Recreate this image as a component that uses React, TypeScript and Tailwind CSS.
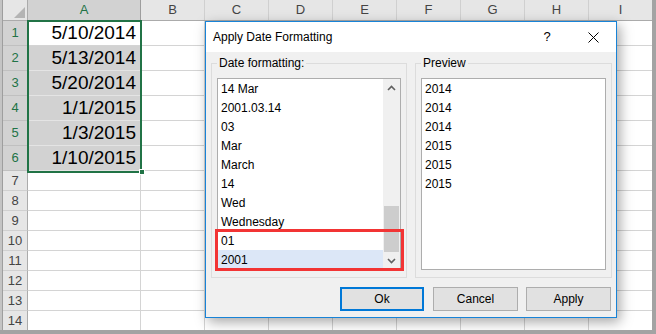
import React from "react"

const font = { fontFamily: '"Liberation Sans", Arial, sans-serif' }

const dates = ["5/10/2014", "5/13/2014", "5/20/2014", "1/1/2015", "1/3/2015", "1/10/2015"]
const otherCols = ["B", "C", "D", "E", "F", "G", "H", "I"]
const formats = ["14 Mar", "2001.03.14", "03", "Mar", "March", "14", "Wed", "Wednesday", "01", "2001"]
const preview = ["2014", "2014", "2014", "2015", "2015", "2015"]

function Chevron({ down = false }: { down?: boolean }) {
  return (
    <svg width="9" height="6" viewBox="0 0 9 6" className={down ? "rotate-180" : ""}>
      <path d="M1 5 L4.5 1.5 L8 5" fill="none" stroke="#606060" strokeWidth="1.6" />
    </svg>
  )
}

function Sheet() {
  return (
    <div className="flex h-full flex-col">
      {/* column headers */}
      <div className="flex h-[21px] shrink-0 border-b border-[#ababab] text-[13px] text-[#444]">
        <div className="relative w-[25px] shrink-0 border-r border-[#ababab] bg-[#e6e6e6]">
          <div className="absolute right-[2px] bottom-[2px] h-0 w-0 border-b-[11px] border-l-[11px] border-b-[#b4b4b4] border-l-transparent" />
        </div>
        <div className="flex w-[113px] shrink-0 items-center justify-center border-r border-[#9e9e9e] bg-[#d2d2d2] text-[#217346]">
          A
        </div>
        {otherCols.map((c) => (
          <div
            key={c}
            className="flex w-[64px] shrink-0 items-center justify-center border-r border-[#d0d0d0] bg-[#e6e6e6]"
          >
            {c}
          </div>
        ))}
      </div>

      {Array.from({ length: 14 }, (_, i) => {
        const selected = i < 6
        return (
          <div key={i} className={`flex shrink-0 ${selected ? "h-[25px]" : "h-[20px]"}`}>
            <div
              className={`flex w-[25px] shrink-0 items-center justify-center border-r border-b border-[#ababab] text-[13px] ${
                selected ? "bg-[#d2d2d2] text-[#217346] border-b-[#c0c0c0]" : "bg-[#e6e6e6] text-[#444] border-b-[#d0d0d0]"
              }`}
            >
              {i + 1}
            </div>
            <div
              className={`flex w-[113px] shrink-0 items-center justify-end border-r border-b pr-[4px] text-[19px] text-black ${
                i === 0 ? "bg-white border-[#d4d4d4]" : selected ? "bg-[#d2d2d2] border-[#e4e4e4]" : "bg-white border-[#d4d4d4]"
              }`}
            >
              {selected ? dates[i] : ""}
            </div>
            {otherCols.map((c) => (
              <div key={c} className="w-[64px] shrink-0 border-r border-b border-[#d4d4d4] bg-white" />
            ))}
          </div>
        )
      })}
    </div>
  )
}

function ListBox({ items, scroll = false }: { items: string[]; scroll?: boolean }) {
  return (
    <div className="relative flex h-[192px] border border-[#adadad] bg-white">
      <div className="flex-1">
        {items.map((t, i) => (
          <div
            key={i}
            className={`flex h-[19px] items-center pl-[3px] text-[12px] text-black ${
              scroll && i === items.length - 1 ? "bg-[#dce7f7]" : ""
            }`}
          >
            {t}
          </div>
        ))}
      </div>
      {scroll && (
        <div className="flex w-[17px] flex-col bg-[#f0f0f0]">
          <div className="flex h-[17px] items-center justify-center">
            <Chevron />
          </div>
          <div className="flex flex-1 flex-col justify-end px-px">
            <div className="h-[46px] bg-[#cdcdcd]" />
          </div>
          <div className="flex h-[17px] items-center justify-center">
            <Chevron down />
          </div>
        </div>
      )}
      {scroll && (
        // red highlight drawn around the last two formats
        <div className="pointer-events-none absolute left-[-3px] top-[150px] h-[42px] w-[189px] border-[3px] border-[#f23434]" />
      )}
    </div>
  )
}

function Dialog() {
  return (
    <div className="absolute left-[205px] top-[21px] flex h-[297px] w-[412px] flex-col border border-[#1883d7] bg-[#f0f0f0] shadow-[3px_4px_12px_rgba(0,0,0,0.35)]">
      <div className="flex h-[30px] shrink-0 items-center bg-white text-[12px] text-black">
        <span className="pl-[7px]">Apply Date Formatting</span>
        <div className="ml-auto flex h-full">
          <div className="flex w-[46px] items-center justify-center text-[13px]">?</div>
          <div className="flex w-[46px] items-center justify-center">
            <svg width="11" height="11" viewBox="0 0 11 11">
              <path d="M0.5 0.5 L10.5 10.5 M10.5 0.5 L0.5 10.5" stroke="#000" strokeWidth="1" />
            </svg>
          </div>
        </div>
      </div>

      <div className="flex flex-1 flex-col pt-[4px] pl-[5px] pr-[4px]">
        <div className="flex gap-[8px]">
          <fieldset className="w-[196px] border border-[#dcdcdc] px-[5px] pt-[8px] pb-[7px]">
            <legend className="px-[2px] text-[12px] leading-[14px] text-black">Date formatting:</legend>
            <ListBox items={formats} scroll />
          </fieldset>
          <fieldset className="w-[197px] border border-[#dcdcdc] px-[5px] pt-[8px] pb-[7px]">
            <legend className="px-[2px] text-[12px] leading-[14px] text-black">Preview</legend>
            <ListBox items={preview} />
          </fieldset>
        </div>

        <div className="mt-[9px] flex justify-end pr-px text-[12px] text-black">
          <button className="h-[24px] w-[84px] border-2 border-[#0078d7] bg-[#e1e1e1]">Ok</button>
          <button className="ml-[9px] h-[24px] w-[85px] border border-[#adadad] bg-[#e1e1e1]">Cancel</button>
          <button className="ml-[8px] h-[24px] w-[85px] border border-[#adadad] bg-[#e1e1e1]">Apply</button>
        </div>
      </div>
    </div>
  )
}

export default function App() {
  return (
    <div style={font} className="relative h-[334px] w-[656px] overflow-hidden border-r-4 border-b-4 border-[#a3a3a3] bg-white">
      <div className="flex h-full">
        <div className="w-[3px] shrink-0 border-r border-[#9e9e9e] bg-[#c4c4c4]" />
        <div className="flex-1 overflow-hidden">
          <Sheet />
        </div>
      </div>

      {/* selection outline for A1:A6 */}
      <div className="pointer-events-none absolute left-[27px] top-[20px] h-[153px] w-[115px] border-2 border-[#217346]" />
      <div className="pointer-events-none absolute left-[139px] top-[169px] h-[6px] w-[6px] border border-white bg-[#217346]" />

      <Dialog />
    </div>
  )
}
